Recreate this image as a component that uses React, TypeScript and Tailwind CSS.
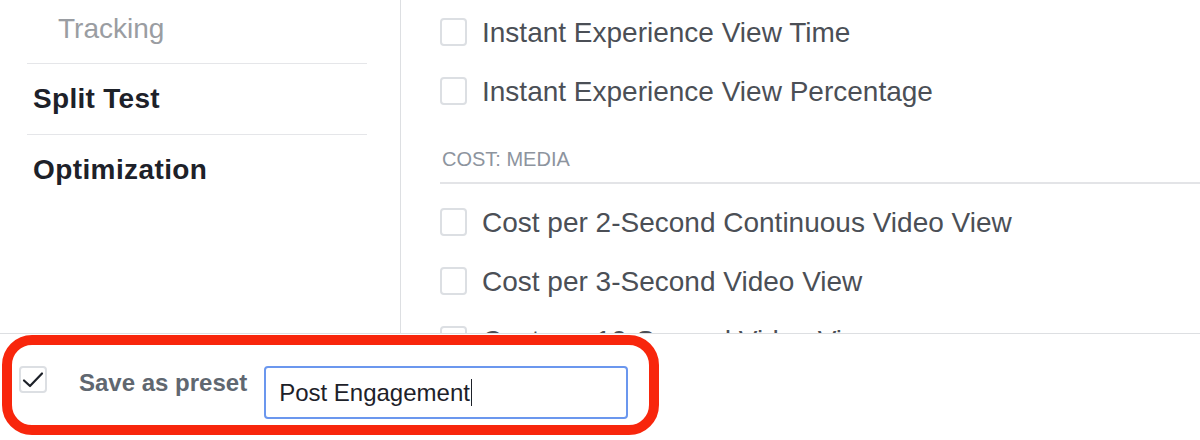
import React from 'react';

const font = { fontFamily: '"Liberation Sans", Arial, sans-serif' };

function Box() {
  return <div className="w-[27px] h-[28px] shrink-0 rounded-[4px] border-2 border-[#dcdfe3] bg-white" />;
}

function MetricRow({ label }: { label: string }) {
  return (
    <div className="h-[59px] flex items-center gap-[15px] shrink-0">
      <Box />
      <span className="text-[28px] leading-[32px] text-[#4b4f56] whitespace-nowrap mt-[3px]">{label}</span>
    </div>
  );
}

export default function App() {
  return (
    <div style={font} className="w-[1200px] h-[440px] bg-white flex flex-col overflow-hidden">
      {/* Top: sidebar + metric list */}
      <div className="h-[334px] flex border-b border-[#dddfe2] overflow-hidden shrink-0">
        {/* Sidebar */}
        <div className="w-[401px] shrink-0 border-r border-[#dddfe2] pl-[27px] pr-[33px] flex flex-col">
          <div className="h-[63px] flex items-center pb-[5px] pl-[31px] text-[28px] text-[#9a9da2]">Tracking</div>
          <div className="h-px bg-[#e5e6e9]" />
          <div className="h-[70px] flex items-center pl-[6px] text-[28px] font-bold tracking-[0.3px] text-[#1d2129]">Split Test</div>
          <div className="h-px bg-[#e5e6e9]" />
          <div className="h-[70px] flex items-center pl-[6px] text-[28px] font-bold tracking-[0.4px] text-[#1d2129]">Optimization</div>
        </div>

        {/* Metrics */}
        <div className="flex-1 pl-[39px] pt-[2px] flex flex-col">
          <MetricRow label="Instant Experience View Time" />
          <MetricRow label="Instant Experience View Percentage" />
          <div className="h-[64px] shrink-0 flex items-end pb-[11px] pl-[2px] border-b-2 border-[#e3e4e7] text-[20px] leading-[24px] text-[#8d949e]">
            COST: MEDIA
          </div>
          <div className="h-[8px] shrink-0" />
          <MetricRow label="Cost per 2-Second Continuous Video View" />
          <MetricRow label="Cost per 3-Second Video View" />
          <MetricRow label="Cost per 10-Second Video View" />
        </div>
      </div>

      {/* Bottom: save as preset */}
      <div className="flex-1 pt-[1px] pl-[2px]">
        <div className="w-[657px] h-[100px] border-[10px] border-[#f8260c] rounded-[30px] flex items-start pl-[7px] pt-[21px]">
          <div className="w-[28px] h-[27px] shrink-0 rounded-[4px] border-2 border-[#dcdfe3] bg-white flex items-center justify-center">
            <svg width="22" height="18" viewBox="0 0 22 18" fill="none">
              <path d="M2 9.5 L8 15 L20 2.5" stroke="#1d2129" strokeWidth="2.2" strokeLinecap="round" strokeLinejoin="round" />
            </svg>
          </div>
          <span className="ml-[32px] mt-[3px] text-[24px] leading-[28px] font-bold text-[#606770] whitespace-nowrap">Save as preset</span>
          <div className="ml-[17px] w-[364px] h-[53px] rounded-[4px] border-2 border-[#6b97ee] flex items-center pl-[13px]">
            <span className="text-[24px] leading-[28px] text-[#1d2129] whitespace-nowrap">Post Engagement</span>
            <span className="ml-[1px] w-px h-[27px] bg-[#1d2129]" />
          </div>
        </div>
      </div>
    </div>
  );
}
